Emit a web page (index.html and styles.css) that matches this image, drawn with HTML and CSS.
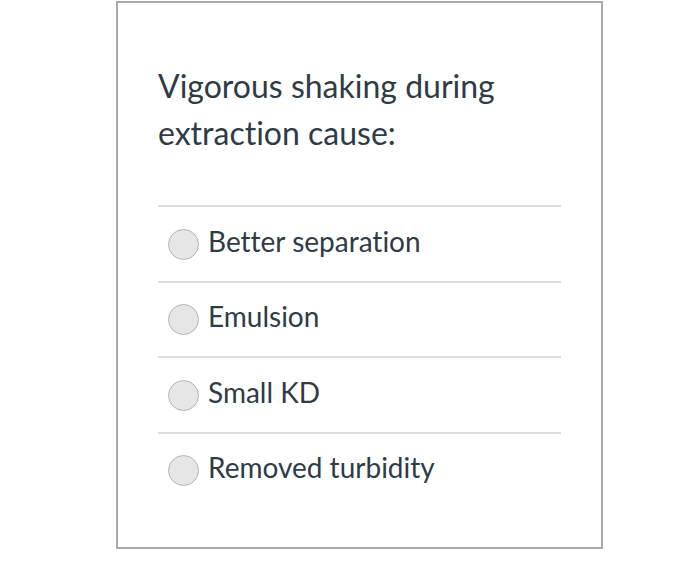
FILE: index.html
```html
<!DOCTYPE html>
<html>
<head>
<meta charset="utf-8">
<link rel="stylesheet" href="styles.css">
</head>
<body>
<div class="card">
  <h1 class="question">Vigorous shaking during extraction cause:</h1>
  <ul class="options">
    <li class="option"><span class="radio"></span><span class="label">Better separation</span></li>
    <li class="option"><span class="radio"></span><span class="label">Emulsion</span></li>
    <li class="option"><span class="radio"></span><span class="label">Small KD</span></li>
    <li class="option"><span class="radio"></span><span class="label">Removed turbidity</span></li>
  </ul>
</div>
</body>
</html>
```

FILE: styles.css
```css
html, body {
  margin: 0;
  padding: 0;
  background: #fff;
}
body {
  font-family: Lato, "Open Sans", sans-serif;
  color: #2f3b45;
  font-variant-ligatures: none;
}
.card {
  box-sizing: border-box;
  margin: 1px 0 0 116px;
  width: 487px;
  height: 548px;
  border: 2px solid #aaaaaa;
  padding: 59px 40px 0 40px;
}
.question {
  margin: 0;
  font-weight: 400;
  font-size: 32px;
  line-height: 47px;
  width: 370px;
}
.options {
  list-style: none;
  margin: 49px 0 0 0;
  padding: 0;
}
.option {
  display: flex;
  align-items: center;
  height: 67.5px;
  padding: 0 0 6px 10px;
  border-top: 2px solid #dddddd;
}
.radio {
  box-sizing: border-box;
  width: 31px;
  height: 31px;
  border-radius: 50%;
  background: #e6e6e6;
  border: 1px solid #b5b5b5;
  margin-top: 7px;
  margin-right: 9px;
  flex: none;
}
.label {
  font-size: 28px;
}
```
